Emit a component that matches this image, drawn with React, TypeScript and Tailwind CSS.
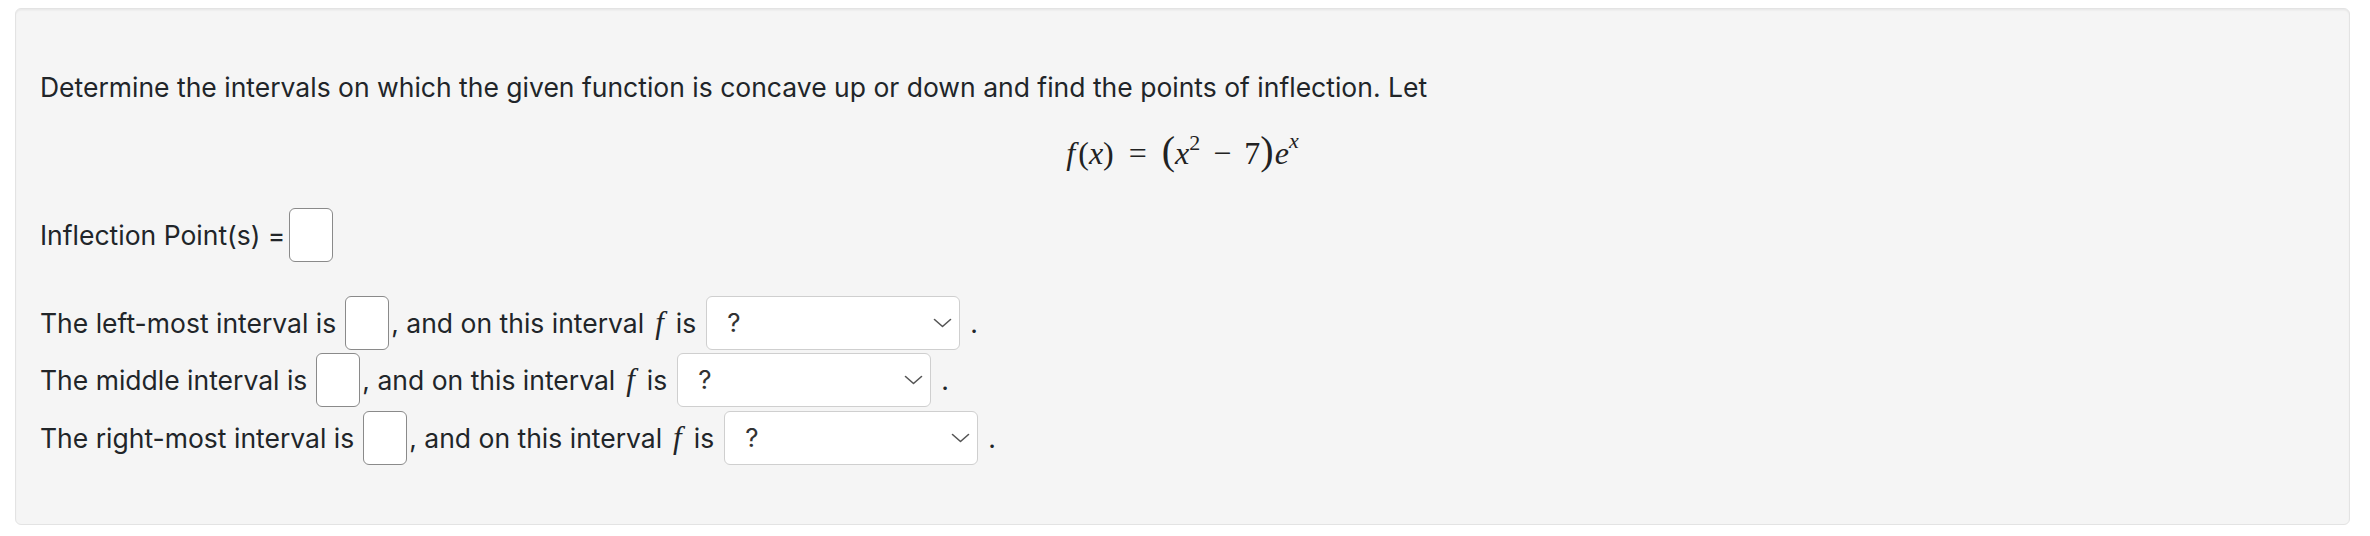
import React from 'react';

const font = { fontFamily: 'Inter, "Liberation Sans", sans-serif' };
const mathFont = { fontFamily: '"Liberation Serif", "DejaVu Serif", serif' };

// small answer blank used throughout the problem
const AnswerBlank: React.FC = () => (
  <input
    type="text"
    aria-label="answer"
    className="w-[44px] h-[54px] shrink-0 rounded-[6px] border-[1.5px] border-[#8a8a8a] bg-white outline-none"
  />
);

const Chevron: React.FC = () => (
  <svg width="19" height="10" viewBox="0 0 19 10" fill="none">
    <polyline points="1.5,1.5 9.5,8.5 17.5,1.5" stroke="#555" strokeWidth="1.6" strokeLinecap="round" strokeLinejoin="round" />
  </svg>
);

const PopUp: React.FC = () => (
  <div className="w-[254px] h-[54px] shrink-0 flex items-center justify-between rounded-[6px] border-[1.5px] border-[#cfcfcf] bg-white pl-[20px] pr-[7px]">
    <span className="text-[26px] text-[#333]">?</span>
    <Chevron />
  </div>
);

const F: React.FC = () => (
  <span className="italic text-[31px] ml-[11px] mr-[12px]" style={mathFont}>
    f
  </span>
);

const IntervalRow: React.FC<{ label: string }> = ({ label }) => (
  <div className="flex items-center h-[54px]">
    <span>{label}</span>
    <span className="ml-[9px]">
      <AnswerBlank />
    </span>
    <span className="ml-[2px]">, and on this interval</span>
    <F />
    <span>is</span>
    <span className="ml-[10px]">
      <PopUp />
    </span>
    <span className="ml-[10px]">.</span>
  </div>
);

export default function App() {
  return (
    <div className="min-h-screen bg-white pt-[8px] pl-[15px]" style={font}>
      <div className="w-[2335px] h-[517px] rounded-[6px] border-[1.5px] border-[#e3e3e3] bg-[#f5f5f5] shadow-[inset_0_1.5px_1.5px_rgba(0,0,0,0.05)] pl-[24px] pr-[24px] pt-[60px] text-[26.5px] leading-[36px] text-[#212529]">
        <p>
          Determine the intervals on which the given function is concave up or down and find the points of inflection. Let
        </p>

        <div className="flex justify-center items-baseline h-[50px] mt-[21px] text-[32px] leading-[50px] text-[#222]" style={mathFont}>
          <span className="italic">f</span>
          <span className="ml-[3px]">(</span>
          <span className="italic">x</span>
          <span>)</span>
          <span className="mx-[15px]">=</span>
          <span className="text-[40px]">(</span>
          <span className="italic">x</span>
          <sup className="text-[22px] -top-[14px]">2</sup>
          <span className="mx-[13px]">−</span>
          <span>7</span>
          <span className="text-[40px]">)</span>
          <span className="italic ml-[1px]">e</span>
          <sup className="italic text-[22px] -top-[16px]">x</sup>
        </div>

        <div className="flex items-center h-[54px] mt-[31.5px]">
          <span className="mr-[4px]">Inflection Point(s) =</span>
          <AnswerBlank />
        </div>

        <div className="flex flex-col gap-[3.5px] mt-[34px]">
          <IntervalRow label="The left-most interval is" />
          <IntervalRow label="The middle interval is" />
          <IntervalRow label="The right-most interval is" />
        </div>
      </div>
    </div>
  );
}
